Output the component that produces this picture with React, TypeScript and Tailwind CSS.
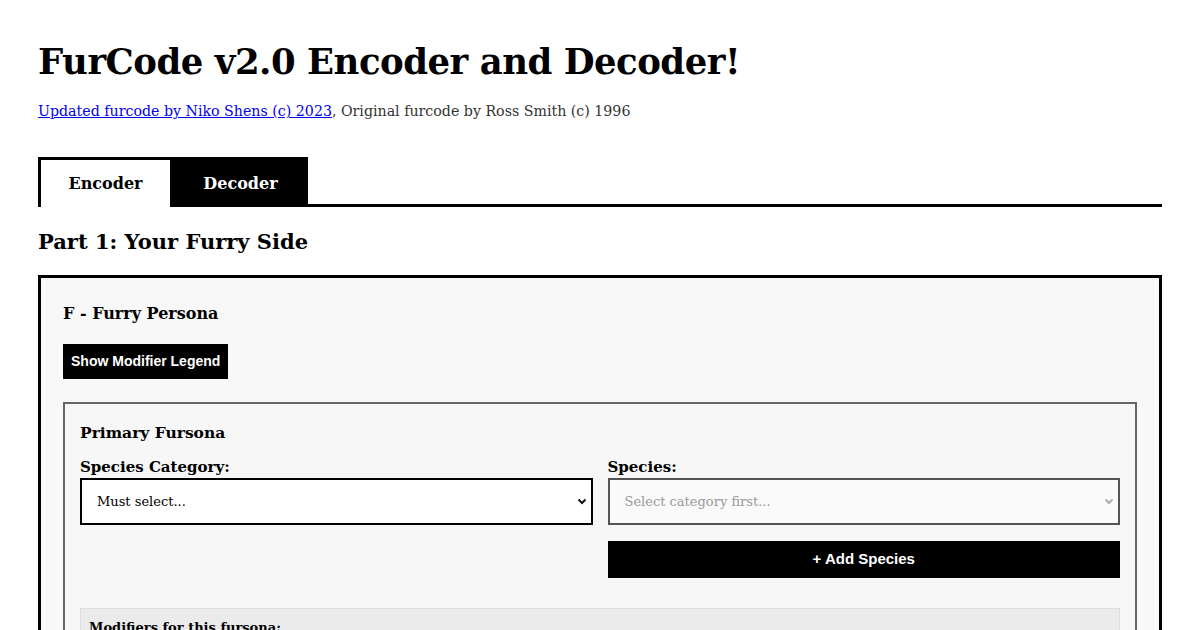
import React from "react";

const serif = { fontFamily: '"DejaVu Serif", Georgia, serif' };
const sans = { fontFamily: '"Liberation Sans", Arial, sans-serif' };

function Chevron({ color }: { color: string }) {
  return (
    <svg width="10" height="7" viewBox="0 0 10 7" className="shrink-0">
      <path d="M1.5 1.5 L5 5 L8.5 1.5" fill="none" stroke={color} strokeWidth="2" />
    </svg>
  );
}

export default function App() {
  return (
    <div className="min-h-[630px] bg-white text-black px-[38px] pt-[40px]" style={serif}>
      <h1 className="text-[35.5px] font-bold leading-[44px] tracking-[-0.5px]">FurCode v2.0 Encoder and Decoder!</h1>
      <p className="mt-[16px] text-[14.2px] text-[#333] leading-[22px]">
        <a href="#" className="text-[#0000ee] underline">Updated furcode by Niko Shens (c) 2023</a>, Original furcode by Ross Smith (c) 1996
      </p>

      <div className="mt-[35px] flex border-b-[3px] border-black">
        <div className="w-[135px] h-[50px] -mb-[3px] bg-white border-[3px] border-b-0 border-black flex items-center justify-center text-[16px] font-bold">
          Encoder
        </div>
        <div className="w-[135px] h-[50px] -mb-[3px] pt-[3px] bg-black text-white flex items-center justify-center text-[16px] font-bold">
          Decoder
        </div>
      </div>

      <h2 className="mt-[20px] text-[21px] font-bold leading-[30px]">Part 1: Your Furry Side</h2>

      <div className="mt-[18px] border-[3px] border-black bg-[#f8f8f8] px-[22px] pt-[24px] pb-[30px]">
        <h3 className="text-[16px] font-bold leading-[24px]">F - Furry Persona</h3>
        <button className="mt-[18px] h-[35px] px-[8px] bg-black text-white text-[14px] font-bold" style={sans}>
          Show Modifier Legend
        </button>

        <div className="mt-[23px] border-2 border-[#666] bg-[#f7f7f7] px-[15px] pt-[17px] pb-[20px]">
          <h4 className="text-[15.5px] font-bold leading-[24px]">Primary Fursona</h4>
          <div className="mt-[11px] grid grid-cols-2 gap-[15px]">
            <div>
              <div className="text-[15px] font-bold leading-[22px]">Species Category:</div>
              <div className="h-[47px] border-2 border-black bg-white flex items-center justify-between pl-[15px] pr-[4px]">
                <span className="text-[13px]">Must select...</span>
                <Chevron color="#111" />
              </div>
            </div>
            <div>
              <div className="text-[15px] font-bold leading-[22px]">Species:</div>
              <div className="h-[47px] border-2 border-[#555] bg-[#fafafa] flex items-center justify-between pl-[15px] pr-[4px]">
                <span className="text-[13px] text-[#999]">Select category first...</span>
                <Chevron color="#aaa" />
              </div>
              <button className="mt-[16px] w-full h-[37px] bg-black text-white text-[15px] font-bold" style={sans}>
                + Add Species
              </button>
            </div>
          </div>

          <div className="mt-[30px] border border-[#ddd] bg-[#ebebeb] px-[8px] pt-[10px] pb-[20px]">
            <div className="text-[13px] font-bold leading-[18px]">Modifiers for this fursona:</div>
          </div>
        </div>
      </div>
    </div>
  );
}
